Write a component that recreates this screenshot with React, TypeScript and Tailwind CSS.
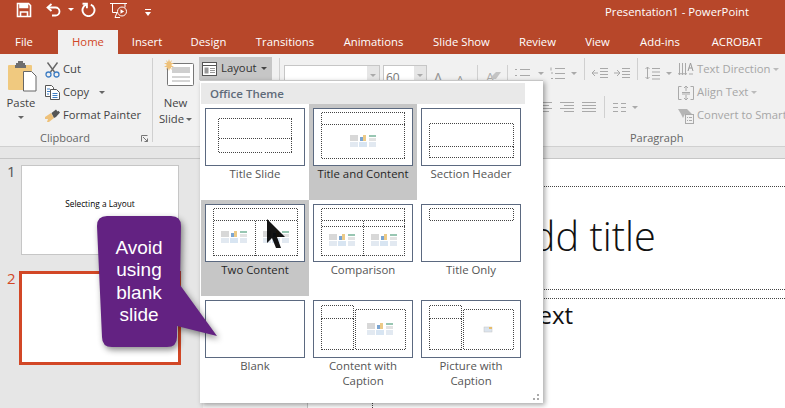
const TABS = [
  { label: "File", cls: "w-[48px] text-white" },
  { label: "Home", cls: "w-[60px] ml-[10px] bg-[#f1f1f1] text-[#d24726]" },
  { label: "Insert", cls: "w-[58px] text-white" },
  { label: "Design", cls: "w-[65px] text-white" },
  { label: "Transitions", cls: "w-[88px] text-white" },
  { label: "Animations", cls: "w-[89px] text-white" },
  { label: "Slide Show", cls: "w-[87px] text-white" },
  { label: "Review", cls: "w-[65px] text-white" },
  { label: "View", cls: "w-[55px] text-white" },
  { label: "Add-ins", cls: "w-[70px] text-white" },
  { label: "ACROBAT", cls: "w-[84px] text-white" },
];

type Box = [number, number, number, number];

const LAYOUTS: {
  label: string[];
  boxes: Box[];
  glyphs?: [number, number][];
  pic?: [number, number];
  cell?: string;
  text?: string;
}[] = [
  { label: ["Title Slide"], boxes: [[13, 10, 73, 20], [13, 30, 73, 14]] },
  {
    label: ["Title and Content"],
    boxes: [[8, 4, 83, 12], [8, 16, 83, 34]],
    glyphs: [[37, 27]],
    cell: "bg-[#c6c6c6]",
    text: "text-[#262626]",
  },
  { label: ["Section Header"], boxes: [[8, 15, 84, 23], [8, 38, 84, 11]] },
  {
    label: ["Two Content"],
    boxes: [[8, 4, 84, 12], [8, 16, 42, 35], [50, 16, 42, 35]],
    glyphs: [[16, 27], [58, 27]],
    cell: "bg-[#c6c6c6]",
    text: "text-[#262626]",
  },
  {
    label: ["Comparison"],
    boxes: [[8, 4, 83, 12], [8, 16, 42, 6], [50, 16, 41, 6], [8, 22, 42, 29], [50, 22, 41, 29]],
    glyphs: [[16, 30], [58, 30]],
  },
  { label: ["Title Only"], boxes: [[8, 4, 84, 12]] },
  { label: ["Blank"], boxes: [] },
  {
    label: ["Content with", "Caption"],
    boxes: [[8, 5, 32, 13], [8, 18, 32, 31], [42, 9, 50, 40]],
    glyphs: [[54, 23]],
  },
  {
    label: ["Picture with", "Caption"],
    boxes: [[8, 5, 32, 13], [8, 18, 32, 31], [42, 9, 50, 40]],
    pic: [63, 27],
  },
];

function Caret({ className = "border-t-[#666]" }: { className?: string }) {
  return (
    <span className={`inline-block h-0 w-0 border-x-[3px] border-t-[3px] border-x-transparent ${className}`} />
  );
}

function ContentGlyph({ x, y }: { x: number; y: number }) {
  return (
    <g transform={`translate(${x} ${y})`} opacity="0.8">
      <rect x="0" y="0" width="8" height="6" fill="#cfcfcf" />
      <rect x="0" y="7" width="8" height="5" fill="#dbe4ee" />
      <rect x="10" y="2" width="3" height="4" fill="#5b8fc7" />
      <rect x="13" y="0" width="3" height="6" fill="#e8bd6a" />
      <rect x="9" y="7" width="8" height="5" fill="#cfdff0" />
      <rect x="19" y="0" width="7" height="2" fill="#7fb8a0" />
      <rect x="19" y="3" width="7" height="3" fill="#dcdcdc" />
      <rect x="19" y="7" width="7" height="5" fill="#dbe4ee" />
    </g>
  );
}

// every edge runs left-to-right or top-to-bottom, so shared edges stay in dash phase
function boxPath([x, y, w, h]: Box) {
  const l = x + 0.5;
  const t = y + 0.5;
  return `M${l} ${t}h${w}M${l} ${t}v${h}M${l} ${t + h}h${w}M${l + w} ${t}v${h}`;
}

function Thumb({ boxes, glyphs, pic }: { boxes: Box[]; glyphs?: [number, number][]; pic?: [number, number] }) {
  return (
    <svg width="100" height="58" viewBox="0 0 100 58" className="block shrink-0">
      <rect x="0.5" y="0.5" width="99" height="57" fill="#fff" stroke="#5b6980" />
      {glyphs?.map(([x, y]) => <ContentGlyph key={`${x}-${y}`} x={x} y={y} />)}
      {pic && (
        <g transform={`translate(${pic[0]} ${pic[1]})`}>
          <rect x="0" y="0" width="8" height="5" fill="#dbe4ee" stroke="#c4c4c4" strokeWidth="0.5" />
          <rect x="5" y="0" width="3" height="2" fill="#e8bd6a" />
        </g>
      )}
      <path
        d={boxes.map(boxPath).join("")}
        fill="none"
        stroke="#444"
        strokeDasharray="1 1"
        shapeRendering="crispEdges"
      />
    </svg>
  );
}

function Lines({ d, w = 15 }: { d: string; w?: number }) {
  return (
    <svg width={w} height="14" viewBox={`0 0 ${w} 14`} className="block shrink-0" stroke="#a9a9a9" fill="none">
      <path d={d} />
    </svg>
  );
}

function Sep({ className = "" }: { className?: string }) {
  return <span className={`block h-[22px] w-px bg-[#d0d0d0] ${className}`} />;
}

function TitleBar() {
  return (
    <div className="flex h-[30px] items-start bg-[#b7472a]">
      <svg width="16" height="16" viewBox="0 0 16 16" className="ml-[16px] mt-[2px]" fill="none" stroke="#fff" strokeWidth="1.6">
        <path d="M1.5 1.5h11l2 2v11h-13z" />
        <path d="M4 1.5v4h7.5v-4" fill="#fff" />
        <path d="M4.5 14.5v-4.5h7v4.5" />
      </svg>
      <svg width="16" height="14" viewBox="0 0 16 14" className="ml-[14px] mt-[3px]" fill="none" stroke="#fff" strokeWidth="1.8">
        <path d="M5.5 1 1.5 4.5l4 3.5" />
        <path d="M2 4.5h7.5a4 4 0 0 1 0 8H6" />
      </svg>
      <span className="ml-[6px] mt-[8px] flex"><Caret className="border-t-white" /></span>
      <svg width="15" height="15" viewBox="0 0 15 15" className="ml-[7px] mt-[2px]" fill="none" stroke="#fff" strokeWidth="1.9">
        <path d="M5.2 2.6a6 6 0 1 0 4.6 0" />
        <path d="M1.5 1.8h4.4v4.4" />
      </svg>
      <svg width="18" height="16" viewBox="0 0 18 16" className="ml-[14px] mt-[2px]" fill="none" stroke="#fff" strokeWidth="1">
        <path d="M0 1.5h17M2.5 1.5v9h5M15 1.5v4" />
        <circle cx="12" cy="9.5" r="4.5" />
        <path d="M10.5 7.2v4.6l3.6-2.3z" fill="#fff" stroke="none" />
        <path d="M5 15.5h5M7 10.5l-2 5" />
      </svg>
      <svg width="6" height="7" viewBox="0 0 6 7" className="ml-[17px] mt-[9px]" fill="#fff">
        <rect x="0" y="0" width="6" height="1" />
        <path d="M0 3h6L3 7z" />
      </svg>
      <span className="ml-auto mr-[36px] mt-[3px] text-[11.300px] leading-[18px] text-white">Presentation1 - PowerPoint</span>
    </div>
  );
}

function TabRow() {
  return (
    <div className="flex h-[24px] bg-[#b7472a]">
      {TABS.map((t) => (
        <span key={t.label} className={`flex items-center justify-center text-[11.300px] ${t.cls}`}>
          {t.label}
        </span>
      ))}
    </div>
  );
}

function ClipboardGroup() {
  return (
    <div className="my-[4px] flex w-[153px] shrink-0 flex-col border-r border-[#d0d0d0]">
      <div className="flex h-[73px] shrink-0">
        <div className="flex w-[42px] flex-col items-center">
          <svg width="30" height="32" viewBox="0 0 30 32" className="ml-[3px] mt-[3px]">
            <rect x="0" y="4" width="24" height="25" rx="1" fill="#f0c97f" />
            <path d="M8 4V2h2V0h5v2h2v2h1v3H7V4z" fill="#6e6e6e" />
            <path d="M15.5 10.5h8l4.5 4.5v15h-12.5z" fill="#fff" stroke="#666" />
          </svg>
          <span className="mt-[2px] text-[11.300px] leading-[16px] text-[#444]">Paste</span>
          <span className="mt-[5px] flex"><Caret /></span>
        </div>
        <div className="ml-[3px] flex flex-col text-[11.200px] text-[#444]">
          <div className="flex h-[23px] items-center">
            <svg width="15" height="16" viewBox="0 0 15 16" fill="none" className="mr-[3px]">
              <path d="M2.5 0.5 9.5 10M12.5 0.5 5.5 10" stroke="#666" strokeWidth="1.4" />
              <circle cx="3.5" cy="12.5" r="2.5" stroke="#3f7ec4" strokeWidth="1.3" />
              <circle cx="11.5" cy="12.5" r="2.5" stroke="#3f7ec4" strokeWidth="1.3" />
            </svg>
            Cut
          </div>
          <div className="flex h-[23px] items-center">
            <svg width="15" height="15" viewBox="0 0 15 15" fill="#fff" stroke="#555" className="mr-[3px]">
              <path d="M0.5 0.5h6l2 2v9h-8z" />
              <path d="M5.5 4.5h6l3 3v7h-9z" />
              <path d="M2 4h3M2 6.500h3M2 9h2M7.500 8.500h5M7.500 10.500h5M7.500 12.500h5" stroke="#3f7ec4" fill="none" />
            </svg>
            <span>Copy</span>
            <span className="ml-[10px] flex"><Caret /></span>
          </div>
          <div className="flex h-[23px] items-center">
            <svg width="16" height="14" viewBox="0 0 16 14" className="mr-[2px]">
              <path d="M0 8 6 4 9 9 4 13H2L3 10 0 10z" fill="#eec17a" />
              <path d="M6.500 4 11 .5l1.500 2 .8-.8 1.700 1.800L11 8 9 9z" fill="#555" />
            </svg>
            Format Painter
          </div>
        </div>
      </div>
      <div className="relative flex h-[14px] shrink-0 items-center pl-[40px] text-[11px] text-[#666]">
        Clipboard
        <svg width="7" height="7" viewBox="0 0 7 7" className="absolute left-[141px] top-[4px]" fill="none" stroke="#777">
          <path d="M0.500 6.500V.5h6" />
          <path d="M2 2l4.500 4.500M3.500 6.500h3v-3" />
        </svg>
      </div>
    </div>
  );
}

function SlidesGroup() {
  return (
    <div className="my-[4px] flex w-[127px] shrink-0 border-r border-[#d0d0d0]">
      <div className="flex w-[45px] flex-col items-center">
        <svg width="32" height="29" viewBox="0 0 32 29" className="ml-[7px] mt-[1px]">
          <rect x="4.500" y="4.500" width="26" height="22" rx="1" fill="#fff" stroke="#777" />
          <rect x="9" y="8" width="18" height="6" fill="#cfcfcf" />
          <path d="M9 18h18M9 22h18" stroke="#aaa" />
          <path d="M6 0l1 3 2-2-1 3 3 0-3 2 3 2-3 0 1 3-2-2-1 3-1-3-2 2 1-3-3 0 3-2-3-2 3 0-1-3 2 2z" fill="#eec17a" />
        </svg>
        <span className="mt-[7px] text-[11.300px] leading-[16px] text-[#444]">New</span>
        <span className="flex items-center text-[11.300px] leading-[16px] text-[#444]">
          Slide<span className="ml-[2px] flex"><Caret /></span>
        </span>
      </div>
      <div className="-mt-px ml-[1px] flex h-[23px] w-[73px] items-center bg-[#c6c6c6] pl-[3px] text-[11.300px] text-[#333]">
        <svg width="15" height="14" viewBox="0 0 15 14" fill="#fff" stroke="#555">
          <rect x="0.500" y="0.500" width="14" height="13" />
          <path d="M0.500 3.500h14" />
          <rect x="2.500" y="5.500" width="4" height="6" fill="#999" stroke="none" />
          <path d="M8 6.500h5M8 8.500h5M8 10.500h5" stroke="#999" />
        </svg>
        <span className="ml-[4px]">Layout</span>
        <span className="ml-[4px] flex"><Caret className="border-t-[#444]" /></span>
      </div>
    </div>
  );
}

function FontGroup() {
  return (
    <div className="flex w-[228px] shrink-0 items-start pl-[4px] pt-[11px]">
      <div className="flex h-[24px] w-[96px] border border-[#c6c6c6] bg-white">
        <span className="flex-1" />
        <span className="flex w-[12px] justify-center bg-[#e6e6e6] pt-[8px]"><Caret className="border-t-[#aaa]" /></span>
      </div>
      <div className="ml-[3px] flex h-[24px] w-[44px] border border-[#c6c6c6] bg-white">
        <span className="flex-1 pl-[2px] text-[12px] leading-[24px] text-[#777]">60</span>
        <span className="flex w-[12px] justify-center bg-[#e6e6e6] pt-[8px]"><Caret className="border-t-[#aaa]" /></span>
      </div>
      <span className="ml-[6px] flex w-[16px] text-[16px] leading-[28px] text-[#999]">A<span className="mt-[3px]"><Caret className="rotate-180 border-t-[#aaa]" /></span></span>
      <span className="ml-[7px] flex w-[16px] text-[13px] leading-[30px] text-[#999]">A<span className="mt-[3px]"><Caret className="border-t-[#aaa]" /></span></span>
      <Sep className="ml-[5px]" />
      <span className="ml-[8px] flex w-[15px] text-[13px] leading-[24px] text-[#aaa]">
        A
        <svg width="10" height="8" viewBox="0 0 10 8" className="-ml-[3px] mt-[7px] shrink-0" fill="#c4c4c4">
          <path d="M0 5 5 0h5L5 7H1z" />
        </svg>
      </span>
      <Sep className="ml-[6px]" />
    </div>
  );
}

function ParagraphGroup() {
  return (
    <div className="my-[4px] flex w-[277px] shrink-0">
      <div className="flex w-[170px] shrink-0 flex-col pl-[7px]">
        <div className="flex h-[22px] shrink-0 items-end">
          <Lines d="M0 3.500h2M0 9.500h2M5 3.500h10M5 9.500h10" />
          <span className="mb-[5px] ml-[8px] flex"><Caret className="border-t-[#aaa]" /></span>
          <span className="ml-[6px]"><Lines d="M5 2.500h10M5 7.500h10M5 12.500h10M1 1.500v3M1 7h2M1 12.500h2" /></span>
          <span className="mb-[5px] ml-[6px] flex"><Caret className="border-t-[#aaa]" /></span>
          <Sep className="ml-[7px]" />
          <span className="ml-[7px]"><Lines w={16} d="M8 2.500h8M8 5.500h8M8 8.500h8M8 11.500h8M6 7H0M3 4 0 7l3 3" /></span>
          <span className="ml-[6px]"><Lines w={16} d="M8 2.500h8M8 5.500h8M8 8.500h8M8 11.500h8M0 7h6M3 4l3 3-3 3" /></span>
          <Sep className="ml-[7px]" />
          <span className="ml-[7px]"><Lines d="M2.500 1v12M0.500 3l2-2 2 2M0.500 11l2 2 2-2M7 2.500h8M7 6h8M7 9.500h8M7 13h8" /></span>
          <span className="mb-[5px] ml-[6px] flex"><Caret className="border-t-[#aaa]" /></span>
        </div>
        <div className="mt-[14px] flex h-[26px] shrink-0 items-center">
          <Lines d="M0 2.500h15M0 5.500h10M0 8.500h15M0 11.500h10" />
          <span className="ml-[8px]"><Lines w={14} d="M0 2.500h14M3 5.500h8M0 8.500h14M3 11.500h8" /></span>
          <span className="ml-[8px]"><Lines w={14} d="M0 2.500h14M4 5.500h10M0 8.500h14M4 11.500h10" /></span>
          <span className="ml-[8px]"><Lines w={14} d="M0 2.500h14M0 5.500h14M0 8.500h14M0 11.500h14" /></span>
          <Sep className="ml-[8px]" />
          <span className="ml-[8px]"><Lines w={13} d="M0 3.500h5M8 3.500h5M0 7.500h5M8 7.500h5M0 11.500h5M8 11.500h5" /></span>
          <span className="ml-[6px] flex"><Caret className="border-t-[#aaa]" /></span>
        </div>
        <span className="ml-[115px] mt-[11px] w-[60px] shrink-0 whitespace-nowrap text-[11px] leading-[14px] text-[#666]">Paragraph</span>
      </div>
      <div className="flex flex-col whitespace-nowrap text-[11.300px] text-[#a6a6a6]">
        <div className="flex h-[23px] items-center">
          <svg width="16" height="16" viewBox="0 0 16 16" className="mr-[3px]" stroke="#aaa" fill="none">
            <path d="M1.500 1v12M4.500 1v12M7.500 1v12M.5 11l1 2 1-2M3.500 11l1 2 1-2M6.500 11l1 2 1-2" />
            <path d="M10 9l2.500-8L15 9M10.800 6h3.400" stroke="#999" />
            <path d="M11 12h4" />
          </svg>
          Text Direction
          <span className="ml-[3px] flex"><Caret className="border-t-[#bbb]" /></span>
        </div>
        <div className="flex h-[23px] items-center">
          <svg width="16" height="16" viewBox="0 0 16 16" className="mr-[3px]" stroke="#aaa" fill="none">
            <path d="M3.500 1.500h-3v13h3M12.500 1.500h3v13h-3" />
            <path d="M8 1v5M8 10v5M6 3l2-2 2 2M6 13l2 2 2-2M4 7.500h8M4 9h8" />
          </svg>
          Align Text
          <span className="ml-[3px] flex"><Caret className="border-t-[#bbb]" /></span>
        </div>
        <div className="flex h-[23px] items-center">
          <svg width="16" height="16" viewBox="0 0 16 16" className="mr-[3px]">
            <path d="M0 1h9l5 5H7L5 10 3 6z" fill="#b5b5b5" />
            <rect x="7.500" y="6.500" width="8" height="9" fill="#f1f1f1" stroke="#aaa" />
            <path d="M9 9.500h1M11 9.500h3M9 12.500h1M11 12.500h3" stroke="#aaa" />
          </svg>
          Convert to SmartArt
        </div>
      </div>
    </div>
  );
}

function SlidePane() {
  return (
    <div className="flex w-[203px] shrink-0 flex-col bg-[#e6e6e6] pt-[6px]">
      <div className="flex pl-[7px]">
        <span className="-mt-[2px] h-[16px] w-[14px] text-[15px] leading-[16px] text-[#555]">1</span>
        <div className="flex h-[90px] w-[158px] items-center justify-center border border-[#c6c6c6] bg-white pb-[12px] text-[8.300px] text-black">
          Selecting a Layout
        </div>
      </div>
      <div className="mt-[16px] flex pl-[7px]">
        <span className="-mt-px h-[16px] w-[12px] text-[15px] leading-[16px] text-[#d24726]">2</span>
        <div className="h-[94px] w-[162px] border-[3px] border-[#d24726] bg-white" />
      </div>
    </div>
  );
}

function SlideArea() {
  return (
    <div className="flex flex-1 bg-white">
      <div className="w-[105px] shrink-0 border-r border-[#c6c6c6] bg-[#f4f4f4]" />
      <div className="flex-1 pl-[64px] pt-[27px]">
        <div className="flex h-[104px] items-center whitespace-nowrap border-y border-l border-dotted border-[#444] pb-[2px] text-[39.700px] font-light text-[#111]">
          Click to add title
        </div>
        <div className="mt-[8px] h-[110px] whitespace-nowrap border-l border-t border-dotted border-[#444] pl-[6px] text-[24px] leading-[32px] text-[#111]">
          • Click to add text
        </div>
      </div>
    </div>
  );
}

function LayoutMenu() {
  return (
    <div className="absolute left-[200px] top-[80px] h-[323px] w-[343px] border-t border-[#c6c6c6] bg-white pl-px pt-[2px] shadow-[2px_2px_5px_rgba(0,0,0,0.35)]">
      <div className="flex h-[21px] w-[324px] items-center bg-[#e9e9e9] pl-[9px] text-[11.500px] font-semibold text-[#5f6b7a]">
        Office Theme
      </div>
      <div className="grid w-[324px] grid-cols-3">
        {LAYOUTS.map((l) => (
          <div key={l.label[0]} className={`flex h-[96px] flex-col items-center pt-[4px] ${l.cell ?? ""}`}>
            <Thumb boxes={l.boxes} glyphs={l.glyphs} pic={l.pic} />
            {l.label.map((s) => (
              <span key={s} className={`text-[11.400px] leading-[15px] ${l.text ?? "text-[#555]"}`}>
                {s}
              </span>
            ))}
          </div>
        ))}
      </div>
      <svg width="8" height="8" viewBox="0 0 8 8" className="absolute bottom-[2px] right-[3px]" fill="#aaa">
        <rect x="5" y="1" width="2" height="2" />
        <rect x="1" y="5" width="2" height="2" />
        <rect x="5" y="5" width="2" height="2" />
      </svg>
    </div>
  );
}

function Callout() {
  return (
    <div className="absolute left-[97px] top-[216px] h-[131px] w-[84px]">
      <svg
        width="125"
        height="135"
        viewBox="97 216 125 135"
        className="absolute left-0 top-0 overflow-visible drop-shadow-[2px_3px_3px_rgba(0,0,0,0.45)]"
      >
        <path
          d="M107 216H171Q181 216 181 226L180 285L217 336L177 326L177 337Q177 347 167 347H112Q102 347 102 337L97 226Q97 216 107 216Z"
          fill="#632282"
        />
      </svg>
      <div className="relative flex h-full flex-col items-center justify-center font-['Liberation_Sans',sans-serif] text-[19px] leading-[22.300px] text-white">
        <span>Avoid</span>
        <span>using</span>
        <span>blank</span>
        <span>slide</span>
      </div>
    </div>
  );
}

function Cursor() {
  return (
    <svg width="20" height="30" viewBox="0 0 20 30" className="absolute left-[267px] top-[219px]">
      <path d="M0 0V24L5 19 9 29H14L10 18H18Z" fill="#000" fillOpacity="0.92" />
    </svg>
  );
}

export default function App() {
  return (
    <div className="relative flex h-[408px] w-[785px] flex-col overflow-hidden bg-white font-['Open_Sans',sans-serif]">
      <TitleBar />
      <TabRow />
      <div className="flex h-[93px] shrink-0 border-b border-[#d0d0d0] bg-[#f1f1f1]">
        <ClipboardGroup />
        <SlidesGroup />
        <FontGroup />
        <ParagraphGroup />
      </div>
      <div className="h-[12px] shrink-0 border-b border-[#c6c6c6] bg-[#e6e6e6]" />
      <div className="flex flex-1 overflow-hidden">
        <SlidePane />
        <SlideArea />
      </div>
      <LayoutMenu />
      <Callout />
      <Cursor />
    </div>
  );
}
